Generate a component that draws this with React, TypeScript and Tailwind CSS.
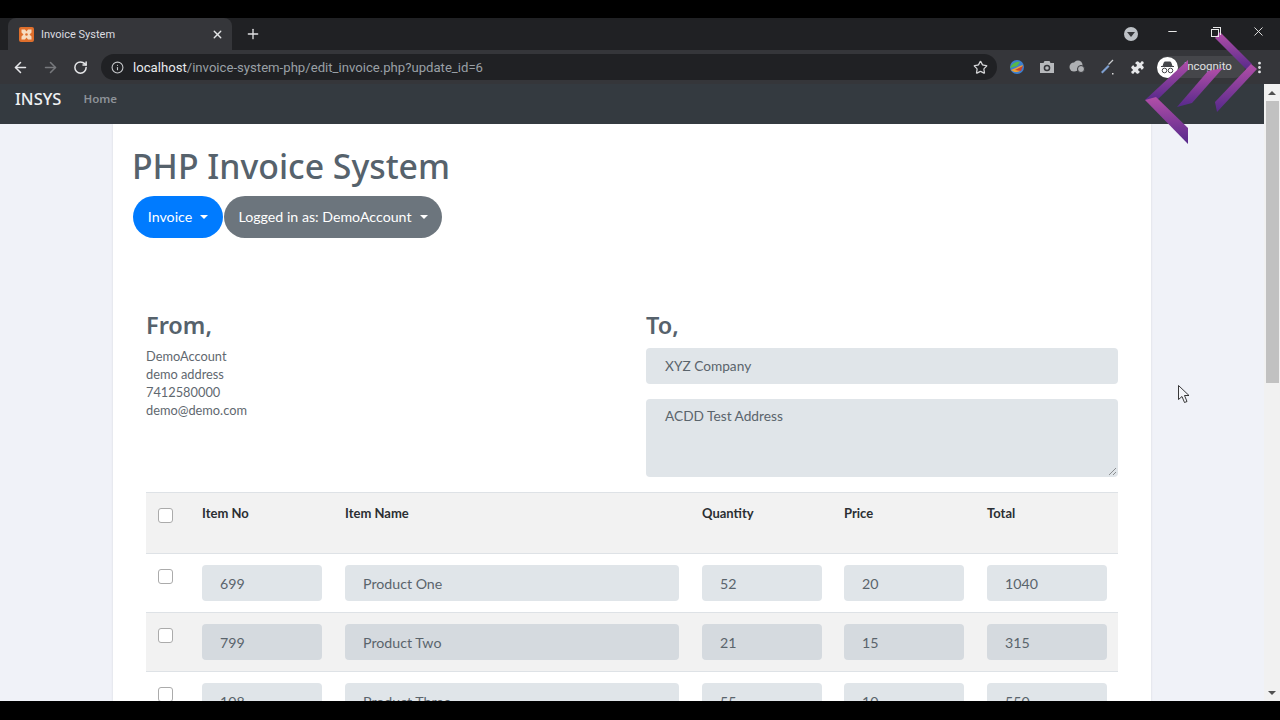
import { ArrowLeft, ArrowRight, RotateCw, Info, Star, Plus, X, Minus, Puzzle, EllipsisVertical } from 'lucide-react'

const rows = [
  { no: '699', name: 'Product One', qty: '52', price: '20', total: '1040' },
  { no: '799', name: 'Product Two', qty: '21', price: '15', total: '315' },
  { no: '108', name: 'Product Three', qty: '55', price: '10', total: '550' },
]

const gridCols = 'grid grid-cols-[56px_143px_357px_142px_143px_131px]'

function Field({ value, width, striped }: { value: string; width: string; striped: boolean }) {
  return (
    <div className={`${width} h-[36px] rounded-[4px] pl-[18px] text-[14.200px] leading-[37px] text-[#5a646c] ${striped ? 'bg-[#d5dadf]' : 'bg-[#e0e5e9]'}`}>
      {value}
    </div>
  )
}

function Check({ className }: { className: string }) {
  return <div className={`h-[15px] w-[15px] rounded-[3px] border border-[#ababab] bg-white ${className}`} />
}

function Caret() {
  return <span className="ml-[8px] inline-block h-0 w-0 border-x-[4px] border-t-[4px] border-x-transparent border-t-white align-[3px]" />
}

function BrowserChrome() {
  return (
    <div className="font-['Roboto',sans-serif]">
      <div className="flex h-[32px] items-end bg-[#202124] pl-[8px]">
        <div className="flex h-[32px] w-[224px] items-center rounded-t-[8px] bg-[#35363a] pl-[11px] pr-[8px]">
          <svg width="15" height="15" viewBox="0 0 15 15" className="shrink-0">
            <rect width="15" height="15" rx="2" fill="#df6f2c" />
            <path d="M2.500 2.500h3.500l1.500 2 1.500-2h3.500v3l-2 2 2 2v3H9l-1.500-2-1.500 2H2.500v-3l2-2-2-2z" fill="#f7dcc0" />
            <circle cx="7.500" cy="7.500" r="1.300" fill="#df6f2c" />
          </svg>
          <span className="ml-[7px] flex-1 pt-[2px] text-[11px] text-[#dcdde0]">Invoice System</span>
          <X size={13} strokeWidth={2.5} className="text-[#e4e5e7]" />
        </div>
        <div className="flex h-[32px] w-[42px] items-center justify-center">
          <Plus size={16} strokeWidth={2} className="text-[#dfe0e2]" />
        </div>
        <div className="flex-1" />
        <div className="mr-[142px] flex h-[14px] w-[14px] -translate-y-[9px] items-center justify-center rounded-full bg-[#bdc1c6]">
          <span className="mt-[1px] h-0 w-0 border-x-[4px] border-t-[5px] border-x-transparent border-t-[#35363a]" />
        </div>
      </div>
      <div className="flex h-[34px] items-center bg-[#35363a] pl-[12px]">
        <ArrowLeft size={17} strokeWidth={2.2} className="text-[#e6e7e9]" />
        <ArrowRight size={17} strokeWidth={2.2} className="ml-[13px] text-[#77797d]" />
        <RotateCw size={15} strokeWidth={2.4} className="ml-[14px] text-[#e6e7e9]" />
        <div className="ml-[13px] flex h-[26px] w-[896px] items-center rounded-full bg-[#202124] pl-[10px] pr-[9px] text-[13.150px]">
          <Info size={13} className="text-[#c6c8cb]" />
          <span className="ml-[9px] flex-1 pt-[1px] text-[#9aa0a6]">
            <span className="text-[#e8eaed]">localhost</span>/invoice-system-php/edit_invoice.php?update_id=6
          </span>
          <Star size={15} strokeWidth={2} className="text-[#d5d6d8]" />
        </div>
        <div className="ml-[12px] flex items-center">
          <svg width="16" height="16" viewBox="0 0 16 16" className="mr-[14px]">
            <circle cx="8" cy="8" r="7" fill="#3d7fcf" />
            <path d="M1 9c2-5 7-7 10-6l-3 4z" fill="#57b947" />
            <path d="M2 11l9-4 3-1-3 6c-3 2-7 1-9-1z" fill="#e9a23a" />
            <path d="M6 11l8-4-2 5z" fill="#c9402f" />
          </svg>
          <svg width="16" height="14" viewBox="0 0 16 14" className="mr-[14px]">
            <path d="M1 3h3.500l1-2h5l1 2H15v10H1z" fill="#b7b9bc" />
            <circle cx="8" cy="8" r="3.300" fill="#35363a" />
            <circle cx="8" cy="8" r="1.800" fill="#b7b9bc" />
          </svg>
          <svg width="16" height="14" viewBox="0 0 16 14" className="mr-[14px]" fill="#aeb0b3">
            <circle cx="5" cy="7" r="4.500" />
            <circle cx="9" cy="5" r="4.500" />
            <circle cx="12" cy="9" r="3.500" stroke="#35363a" />
          </svg>
          <svg width="16" height="16" viewBox="0 0 16 16" className="mr-[14px]">
            <path d="M2 13L9 6l1.500 1.500L3.500 14.500z" fill="#7f9fd0" />
            <path d="M9.500 5.500L14 1" stroke="#c9cbce" strokeWidth="1.200" />
            <rect x="13" y="14" width="1.500" height="1.500" fill="#d8d8d8" />
          </svg>
          <Puzzle size={15} strokeWidth={0} fill="#e6e7e9" className="ml-[1px] mr-[12px]" />
          <div className="flex h-[22px] w-[88px] items-center rounded-full bg-[#45464a]">
            <div className="flex h-[21px] w-[21px] items-center justify-center rounded-full bg-white">
              <svg width="15" height="13" viewBox="0 0 15 13" fill="none">
                <path d="M3 5l1.500-4h6L12 5zM1 5.500h13" stroke="#45464a" fill="#45464a" />
                <circle cx="4.500" cy="9.500" r="2.300" stroke="#45464a" />
                <circle cx="10.500" cy="9.500" r="2.300" stroke="#45464a" />
              </svg>
            </div>
            <span className="ml-[6px] text-[11.500px] text-[#e0e1e3]">Incognito</span>
          </div>
          <EllipsisVertical size={15} strokeWidth={2.5} className="ml-[7px] text-[#e6e7e9]" />
        </div>
      </div>
    </div>
  )
}

function Scrollbar() {
  return (
    <div className="flex w-[16px] shrink-0 flex-col items-center bg-[#f1f1f1]">
      <div className="flex h-[17px] items-center justify-center">
        <span className="h-0 w-0 border-x-[4px] border-b-[4px] border-x-transparent border-b-[#505050]" />
      </div>
      <div className="h-[282px] w-[13px] bg-[#c1c1c1]" />
      <div className="flex-1" />
      <div className="flex h-[17px] items-center justify-center">
        <span className="h-0 w-0 border-x-[4px] border-t-[4px] border-x-transparent border-t-[#505050]" />
      </div>
    </div>
  )
}

export default function App() {
  return (
    <div className="relative flex h-[720px] w-[1280px] flex-col overflow-hidden bg-black font-['Lato',sans-serif]">
      <div className="h-[18px] shrink-0" />
      <BrowserChrome />
      <div className="flex h-[617px] shrink-0">
        <div className="flex min-w-0 flex-1 flex-col">
          <nav className="flex h-[40px] shrink-0 items-start bg-[#343a40] pl-[15px] pt-[3px] font-['Noto_Sans',sans-serif]">
            <span className="text-[16.500px] font-medium leading-[24px] text-[#eef0f2]">INSYS</span>
            <span className="ml-[22px] text-[11.500px] font-semibold leading-[24px] text-[#8d9298]">Home</span>
          </nav>
          <div className="flex-1 overflow-hidden bg-[#f0f2f8] pl-[113px]">
            <main className="h-full w-[1038px] bg-white pl-[19px] pr-[33px] shadow-[0_0_2px_#d4d6dc]">
              <h1 className="pt-[19px] font-['Noto_Sans',sans-serif] text-[33.800px] font-medium leading-[46px] text-[#56626c]">PHP Invoice System</h1>
              <div className="mt-[7px] flex gap-[1px] pl-[1px]">
                <button className="h-[42px] w-[90px] rounded-full bg-[#007bff] text-[14.200px] text-white">
                  Invoice<Caret />
                </button>
                <button className="h-[42px] w-[218px] rounded-full bg-[#6c757d] text-[14.200px] text-white">
                  Logged in as: DemoAccount<Caret />
                </button>
              </div>
              <div className="ml-[14px] mt-[70px] flex">
                <section className="w-[500px]">
                  <h2 className="font-['Noto_Sans',sans-serif] text-[23.500px] font-semibold leading-[34px] text-[#56626c]">From,</h2>
                  <div className="mt-[5px] text-[12.800px] leading-[18px] text-[#5f686f]">
                    <div>DemoAccount</div>
                    <div>demo address</div>
                    <div>7412580000</div>
                    <div>demo@demo.com</div>
                  </div>
                </section>
                <section className="w-[472px]">
                  <h2 className="font-['Noto_Sans',sans-serif] text-[23.500px] font-semibold leading-[34px] text-[#56626c]">To,</h2>
                  <div className="mt-[6px] h-[36px] rounded-[4px] bg-[#e0e5e9] pl-[19px] text-[13.700px] leading-[36px] text-[#5a646c]">XYZ Company</div>
                  <div className="relative mt-[15px] h-[78px] rounded-[4px] bg-[#e0e5e9] pl-[19px] pt-[6px] text-[13.700px] leading-[22px] text-[#5a646c]">
                    ACDD Test Address
                    <svg width="9" height="9" viewBox="0 0 9 9" className="absolute bottom-[1px] right-[1px]" stroke="#8a8d90">
                      <path d="M1 8l7-7M5 8l3-3" />
                    </svg>
                  </div>
                </section>
              </div>
              <div className="ml-[14px] mt-[15px] w-[972px]">
                <div className={`${gridCols} h-[62px] border-y border-[#dee2e6] bg-[#f2f2f2] pt-[10px] text-[13px] font-bold leading-[20px] text-[#2b2f33]`}>
                  <div><Check className="ml-[12px] mt-[5px]" /></div>
                  <div>Item No</div>
                  <div>Item Name</div>
                  <div>Quantity</div>
                  <div>Price</div>
                  <div>Total</div>
                </div>
                {rows.map((row, i) => {
                  const striped = i % 2 === 1
                  return (
                    <div key={row.no} className={`${gridCols} h-[59px] border-b border-[#dee2e6] pt-[11px] ${striped ? 'bg-[#f2f2f2]' : 'bg-white'}`}>
                      <div><Check className="ml-[12px] mt-[4px]" /></div>
                      <Field value={row.no} width="w-[120px]" striped={striped} />
                      <Field value={row.name} width="w-[334px]" striped={striped} />
                      <Field value={row.qty} width="w-[120px]" striped={striped} />
                      <Field value={row.price} width="w-[120px]" striped={striped} />
                      <Field value={row.total} width="w-[120px]" striped={striped} />
                    </div>
                  )
                })}
              </div>
            </main>
          </div>
        </div>
        <Scrollbar />
      </div>

      {/* watermark over the toolbar */}
      <svg width="120" height="120" viewBox="1140 28 120 120" className="absolute left-[1140px] top-[28px]">
        <defs>
          <linearGradient id="wm" x1="0" y1="0" x2="0" y2="1">
            <stop offset="0" stopColor="#b24fa8" />
            <stop offset="1" stopColor="#56298b" />
          </linearGradient>
        </defs>
        <polygon points="1188,60 1188,70 1156,101 1145,100" fill="url(#wm)" />
        <polygon points="1145,100 1156,97 1188,128 1188,144" fill="url(#wm)" />
        <polygon points="1223,68 1208,71 1177,107 1192,103" fill="url(#wm)" />
        <polygon points="1220,32 1252,64 1247,70 1215,38" fill="url(#wm)" />
        <polygon points="1251,64 1257,69 1217,112 1215,102" fill="url(#wm)" />
      </svg>

      {/* window controls */}
      <Minus size={13} className="absolute left-[1166px] top-[25px] text-[#e8e8e8]" />
      <div className="absolute left-[1211px] top-[29px] h-[8px] w-[8px] border border-[#e8e8e8]" />
      <div className="absolute left-[1213px] top-[27px] h-[8px] w-[8px] border-r border-t border-[#e8e8e8]" />
      <X size={15} strokeWidth={1.500} className="absolute left-[1251px] top-[24px] text-[#e8e8e8]" />

      {/* mouse pointer */}
      <svg width="12" height="19" viewBox="0 0 12 19" className="absolute left-[1178px] top-[385px]">
        <path d="M0.500 0.500v14l3.500-3 2.500 6 2.500-1-2.500-6h4.500z" fill="#f4f5f9" stroke="#222" strokeWidth="0.900" />
      </svg>
    </div>
  )
}
